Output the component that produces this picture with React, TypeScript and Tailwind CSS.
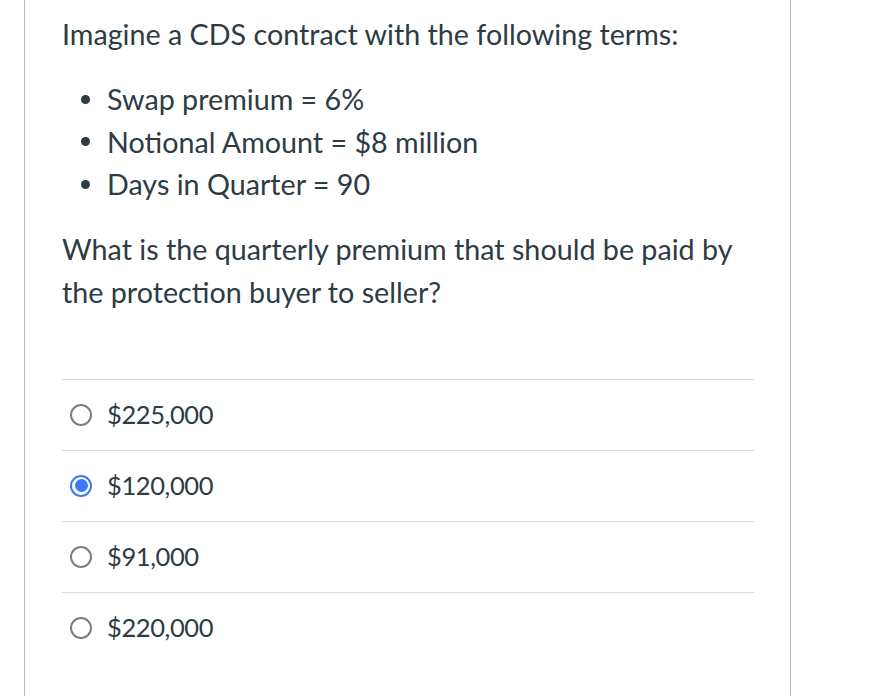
import React from "react";

const answers = [
  { label: "$225,000", selected: false },
  { label: "$120,000", selected: true },
  { label: "$91,000", selected: false },
  { label: "$220,000", selected: false },
];

const terms = ["Swap premium = 6%", "Notional Amount = $8 million", "Days in Quarter = 90"];

function Radio({ selected }: { selected: boolean }) {
  if (selected) {
    return (
      <span className="flex h-[22px] w-[22px] items-center justify-center rounded-full border-[2px] border-[#3b7af5] bg-white">
        <span className="h-[13px] w-[13px] rounded-full bg-[#3b7af5]" />
      </span>
    );
  }
  return <span className="h-[22px] w-[22px] rounded-full border-[2px] border-[#7d7d7d] bg-white" />;
}

export default function App() {
  return (
    <div className="min-h-[696px] bg-white font-['Lato',sans-serif] text-[#2d3b45]">
      <div className="ml-[24px] min-h-[696px] w-[767px] border-x border-[#b8b8b8] pl-[37px] pr-[20px] pt-[13px]">
        <p className="text-[28.7px] leading-[43px]">Imagine a CDS contract with the following terms:</p>
        <ul className="mt-[22px] pl-[19px] text-[28.7px] leading-[42.5px]">
          {terms.map((t) => (
            <li key={t} className="flex items-center gap-[17px]">
              <span className="h-[9px] w-[9px] rounded-full bg-[#2d3b45]" />
              <span>{t}</span>
            </li>
          ))}
        </ul>
        <p className="mt-[22px] text-[28.7px] leading-[43px]">
          What is the quarterly premium that should be paid by
          <br />
          the protection buyer to seller?
        </p>

        <div className="mt-[65px] w-[692px]">
          {answers.map((a) => (
            <div
              key={a.label}
              className="flex h-[71px] items-center gap-[15px] border-t border-[#dcdcdc] pl-[8px]"
            >
              <Radio selected={a.selected} />
              <span className="text-[25.5px] tracking-[-0.4px]">{a.label}</span>
            </div>
          ))}
        </div>
      </div>
    </div>
  );
}
